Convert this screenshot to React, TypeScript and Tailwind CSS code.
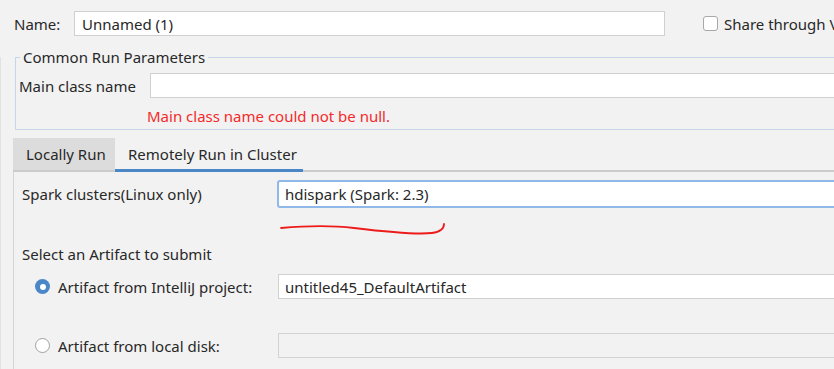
import React from "react";

const font = { fontFamily: '"Noto Sans", "Open Sans", sans-serif' };

export default function App() {
  return (
    <div
      className="w-[834px] h-[369px] overflow-hidden bg-[#f2f2f2] text-[#282828] text-[15px] leading-[20px]"
      style={font}
    >
      {/* Name row */}
      <div className="flex items-center pt-[11px] h-[36px]">
        <div className="w-[74px] pl-[14px] shrink-0">Name:</div>
        <div className="w-[591px] h-[25px] bg-white border border-[#d0d0d0] flex items-center px-[7px] shrink-0">
          Unnamed (1)
        </div>
        <div className="ml-[38px] w-[15px] h-[15px] bg-white border border-[#a8a8a8] rounded-[3px] shrink-0" />
        <div className="ml-[6px] whitespace-nowrap">Share through VCS</div>
      </div>

      <div className="border-l border-[#e2e2e2] h-[333px] w-[900px]">
        {/* Common run parameters */}
        <div className="ml-[14px] mt-[21px] w-[840px] h-[73px] border border-[#c6d6e8] pl-[3px]">
          <div className="-mt-[11px] h-[20px] ml-[1px] px-[3px] bg-[#f2f2f2] w-fit whitespace-nowrap">
            Common Run Parameters
          </div>
          <div className="flex items-center mt-[6px]">
            <div className="w-[131px] shrink-0 whitespace-nowrap">Main class name</div>
            <div className="w-[700px] h-[25px] bg-white border border-[#d0d0d0] shrink-0" />
          </div>
          <div className="pl-[128px] mt-[8px] text-[#f42a2a] whitespace-nowrap">
            Main class name could not be null.
          </div>
        </div>

        {/* Tabs */}
        <div className="flex ml-[12px] mt-[8px] h-[34px] border-b-2 border-[#cbcbcb]">
          <div className="w-[102px] shrink-0 bg-[#dcdcdc] flex items-center pl-[13px] whitespace-nowrap">
            Locally Run
          </div>
          <div className="w-[188px] shrink-0 flex items-center pl-[13px] border-b-[3px] border-[#4b86c6] -mb-[2px] whitespace-nowrap">
            Remotely Run in Cluster
          </div>
        </div>

        {/* Panel */}
        <div className="ml-[12px] border-l border-[#d4d4d4] h-[200px] relative">
          <div className="flex items-center pt-[8px]">
            <div className="w-[263px] pl-[8px] shrink-0 whitespace-nowrap">Spark clusters(Linux only)</div>
            <div className="w-[600px] h-[28px] bg-white border-2 border-[#90b9ea] rounded-[3px] flex items-center px-[6px] shrink-0">
              hdispark (Spark: 2.3)
            </div>
          </div>

          <svg className="absolute left-[260px] top-[46px]" width="180" height="22" viewBox="0 0 180 22">
            <path
              d="M7 10 C 30 8, 55 7, 80 10 S 140 17, 158 15 C 166 14, 170 11, 170 6"
              fill="none"
              stroke="#ee1b1b"
              strokeWidth="1.8"
              strokeLinecap="round"
            />
          </svg>

          <div className="pl-[8px] mt-[36px] whitespace-nowrap">Select an Artifact to submit</div>

          <div className="flex items-center mt-[10px] h-[25px]">
            <div className="ml-[21px] w-[15px] h-[15px] rounded-full bg-[#4a86c8] flex items-center justify-center shrink-0">
              <div className="w-[6px] h-[6px] rounded-full bg-white" />
            </div>
            <div className="ml-[8px] w-[220px] shrink-0 whitespace-nowrap">Artifact from IntelliJ project:</div>
            <div className="w-[600px] h-[25px] bg-white border border-[#d0d0d0] flex items-center px-[6px] shrink-0">
              untitled45_DefaultArtifact
            </div>
          </div>

          <div className="flex items-center mt-[34px] h-[25px]">
            <div className="ml-[21px] w-[15px] h-[15px] rounded-full bg-white border border-[#a0a0a0] shrink-0" />
            <div className="ml-[8px] w-[220px] shrink-0 whitespace-nowrap">Artifact from local disk:</div>
            <div className="w-[600px] h-[25px] bg-[#f2f2f2] border border-[#d3d3d3] shrink-0" />
          </div>
        </div>
      </div>
    </div>
  );
}
